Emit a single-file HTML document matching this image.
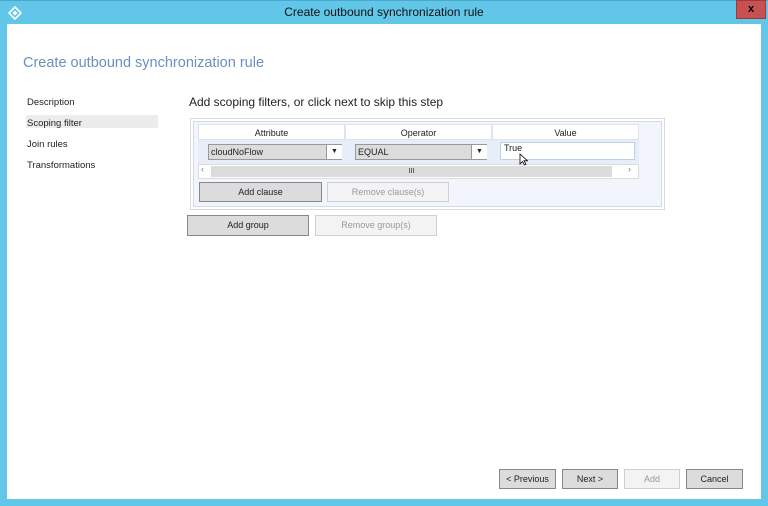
<!DOCTYPE html><html><head><style>
body{margin:0;width:768px;height:506px;background:#62c6e8;font-family:"Liberation Sans",sans-serif;position:relative;overflow:hidden;font-size:9px;color:#222}
.a{position:absolute}
.btn{position:absolute;background:#dcdcdc;border:1px solid #a8a8a8;box-sizing:border-box;text-align:center;font-size:9px;color:#222}
.dis{background:#f3f3f3;border-color:#d0d0d0;color:#999}
.hd{position:absolute;top:124px;height:16px;line-height:16px;text-align:center;background:#fff;border:1px solid #dde4ee;box-sizing:border-box;font-size:9px}
</style></head><body>
<div class="a" style="left:0;top:0;width:768px;height:1px;background:#4aa8c8"></div>
<svg class="a" style="left:8px;top:6px" width="14" height="14" viewBox="0 0 14 14"><path d="M7 1L13 7 7 13 1 7Z" fill="none" stroke="#fff" stroke-width="1.6"/><path d="M7 4.5L9.5 7 7 9.5 4.5 7Z" fill="#fff"/></svg>
<div class="a" style="left:0;width:768px;top:5px;text-align:center;font-size:12px;color:#111">Create outbound synchronization rule</div>
<div class="a" style="left:736px;top:0;width:30px;height:19px;background:#c75050;border:1px solid #9a3a3a;box-sizing:border-box;color:#000;text-align:center;font-weight:bold;font-size:11px;line-height:17px">x</div>
<div class="a" style="left:7px;top:24px;width:754px;height:475px;background:#fff"></div>
<div class="a" style="left:23px;top:55px;font-size:14.5px;color:#6b8fc0">Create outbound synchronization rule</div>
<div class="a" style="left:26px;top:115px;width:132px;height:13px;background:#ececec"></div>
<div class="a" style="left:27px;top:92px;font-size:9.5px;line-height:21px">Description<br>Scoping filter<br>Join rules<br>Transformations</div>
<div class="a" style="left:189px;top:95px;font-size:12px;color:#222">Add scoping filters, or click next to skip this step</div>
<div class="a" style="left:190px;top:118px;width:475px;height:92px;border:1px solid #dadada;box-sizing:border-box"></div>
<div class="a" style="left:193px;top:121px;width:469px;height:86px;background:#f2f6fc;border:1px solid #cfdcec;box-sizing:border-box"></div>
<div class="hd" style="left:198px;width:147px">Attribute</div>
<div class="hd" style="left:345px;width:147px">Operator</div>
<div class="hd" style="left:492px;width:147px">Value</div>
<div class="a" style="left:198px;top:140px;width:441px;height:24px;background:#e8eef8"></div>
<div class="a" style="left:208px;top:144px;width:134px;height:16px;background:#dcdcdc;border:1px solid #999;box-sizing:border-box;line-height:14px;padding-left:2px">cloudNoFlow</div>
<div class="a" style="left:326px;top:145px;width:15px;height:14px;background:#fff;border-left:1px solid #999;text-align:center;font-size:7px;line-height:14px">▼</div>
<div class="a" style="left:355px;top:144px;width:132px;height:16px;background:#dcdcdc;border:1px solid #999;box-sizing:border-box;line-height:14px;padding-left:2px">EQUAL</div>
<div class="a" style="left:471px;top:145px;width:15px;height:14px;background:#fff;border-left:1px solid #999;text-align:center;font-size:7px;line-height:14px">▼</div>
<div class="a" style="left:500px;top:142px;width:135px;height:18px;background:#fff;border:1px solid #bcd0e8;box-sizing:border-box;padding-left:3px;line-height:11px">True</div>
<div class="a" style="left:198px;top:164px;width:441px;height:15px;background:#fff;border:1px solid #ddd;box-sizing:border-box"></div>
<div class="a" style="left:211px;top:166px;width:401px;height:11px;background:#dcdcdc;text-align:center;font-size:7px;line-height:11px">III</div>
<div class="a" style="left:201px;top:164px;font-size:9px;color:#777">‹</div>
<div class="a" style="left:628px;top:164px;font-size:9px;color:#777">›</div>
<div class="btn" style="left:199px;top:182px;width:123px;height:20px;line-height:18px;border-color:#888">Add clause</div>
<div class="btn dis" style="left:327px;top:182px;width:122px;height:20px;line-height:18px">Remove clause(s)</div>
<div class="btn" style="left:187px;top:215px;width:122px;height:21px;line-height:19px;border-color:#888">Add group</div>
<div class="btn dis" style="left:315px;top:215px;width:122px;height:21px;line-height:19px">Remove group(s)</div>
<div class="btn" style="left:499px;top:469px;width:57px;height:20px;line-height:18px;border-color:#888">&lt; Previous</div>
<div class="btn" style="left:562px;top:469px;width:56px;height:20px;line-height:18px;border-color:#888">Next &gt;</div>
<div class="btn dis" style="left:624px;top:469px;width:56px;height:20px;line-height:18px">Add</div>
<div class="btn" style="left:686px;top:469px;width:57px;height:20px;line-height:18px;border-color:#888">Cancel</div>
<svg class="a" style="left:519px;top:153px" width="9" height="13"><path d="M1 1V11L3.5 8.5 5.5 12 7 11.3 5 7.8H8.5Z" fill="#fff" stroke="#000" stroke-width=".8"/></svg>
</body></html>
